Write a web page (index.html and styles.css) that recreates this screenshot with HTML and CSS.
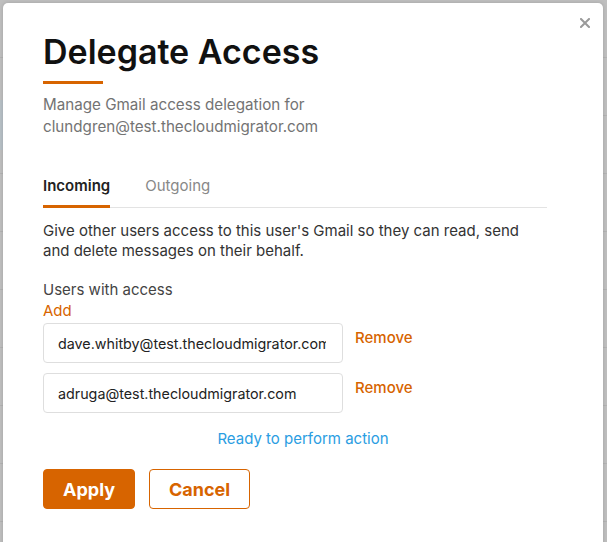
FILE: index.html
```html
<!DOCTYPE html>
<html lang="en">
<head>
  <meta charset="UTF-8">
  <meta name="viewport" content="width=device-width,initial-scale=1">
  <title>Delegate Access</title>
  <link rel="stylesheet" href="styles.css">
</head>
<body>
  <div class="backdrop">
    <div class="modal">
      <button class="close" aria-label="Close">
        <svg width="10" height="10" viewBox="0 0 10 10"><path d="M1 1L9 9M9 1L1 9" stroke="#9a9a9a" stroke-width="2" stroke-linecap="square"/></svg>
      </button>
      <h1>Delegate Access</h1>
      <div class="title-bar"></div>
      <p class="subtitle">Manage Gmail access delegation for<br>clundgren@test.thecloudmigrator.com</p>

      <nav class="tabs">
        <span class="tab active">Incoming</span>
        <span class="tab">Outgoing</span>
      </nav>

      <p class="desc">Give other users access to this user's Gmail so they can read, send<br>and delete messages on their behalf.</p>

      <div class="label">Users with access</div>
      <a class="add">Add</a>

      <div class="users">
        <div class="user-row">
          <input class="email" value="dave.whitby@test.thecloudmigrator.com">
          <a class="remove">Remove</a>
        </div>
        <div class="user-row">
          <input class="email" value="adruga@test.thecloudmigrator.com">
          <a class="remove">Remove</a>
        </div>
      </div>

      <div class="status">Ready to perform action</div>

      <div class="actions">
        <button class="btn primary">Apply</button>
        <button class="btn outline">Cancel</button>
      </div>
    </div>
  </div>
</body>
</html>
```

FILE: styles.css
```css
:root {
  --orange: #d76400;
  --text: #333;
  --muted: #737373;
  --blue: #2a9de2;
}
html, body { height: 100%; }
body {
  margin: 0;
  background: #bfbfbf;
  font-family: Inter, "Noto Sans", sans-serif;
  overflow: hidden;
}
.backdrop {
  height: 100%;
  padding: 3px 4px 0 3px;
  box-sizing: border-box;
  background:
    linear-gradient(to right, #b7c0c6 0 3px, transparent 3px) 0 100px / 100% 50px no-repeat,
    repeating-linear-gradient(to bottom, transparent 0 57px, #b3b3b3 57px 58px);
}
.modal {
  position: relative;
  width: 600px;
  min-height: 600px;
  box-sizing: border-box;
  background: #fff;
  border-radius: 5px 5px 0 0;
  box-shadow: 0 0 4px rgba(0,0,0,0.15);
  padding: 29px 40px 0 40px;
}
.close {
  position: absolute; top: 10px; right: 8px;
  background: none; border: 0; padding: 5px; cursor: pointer;
  line-height: 0;
}
h1 {
  margin: 0 0 9px;
  font-size: 34px; line-height: 40px; font-weight: 600;
  color: #111;
}
.title-bar { width: 60px; height: 3px; background: var(--orange); }
.subtitle {
  margin: 10px 0 0;
  font-size: 15.2px; line-height: 22px;
  color: var(--muted);
}
.tabs {
  display: flex; gap: 35px;
  margin: 37px 16px 0 0;
  border-bottom: 1px solid #e3e3e3;
}
.tab {
  font-size: 15px; line-height: 22px;
  color: #888;
  padding-bottom: 8px;
  border-bottom: 3px solid transparent;
  margin-bottom: -1px;
}
.tab.active {
  color: #222; font-weight: 600;
  border-bottom-color: var(--orange);
}
.desc {
  margin: 13px 0 0;
  font-size: 15px; line-height: 20px;
  color: var(--text);
}
.label {
  margin-top: 19px;
  font-size: 15px; line-height: 20px;
  color: #444;
}
.add {
  display: block;
  margin-top: 1px;
  font-size: 15px; line-height: 20px;
  color: var(--orange);
}
.users {
  display: flex; flex-direction: column; gap: 10px;
  margin-top: 2px;
}
.user-row { display: flex; align-items: flex-start; }
.email {
  width: 300px; height: 40px;
  box-sizing: border-box;
  border: 1px solid #dedede; border-radius: 4px;
  padding: 0 16px 0 14px;
  font-family: inherit; font-size: 14.3px;
  color: #222;
  outline: none;
}
.remove {
  margin-left: 12px;
  padding-top: 5px;
  font-size: 15px; line-height: 20px; font-weight: 500;
  color: var(--orange);
}
.status {
  margin-top: 16px;
  text-align: center;
  font-size: 15px; line-height: 20px;
  color: var(--blue);
}
.actions {
  display: flex; gap: 14px;
  margin-top: 20px;
}
.btn {
  height: 40px;
  padding: 0 19px;
  border-radius: 4px;
  font-family: inherit; font-size: 18px; font-weight: 700;
  cursor: pointer;
}
.primary { background: var(--orange); color: #fff; border: 1px solid var(--orange); }
.outline { background: #fff; color: var(--orange); border: 1px solid var(--orange); }
```
